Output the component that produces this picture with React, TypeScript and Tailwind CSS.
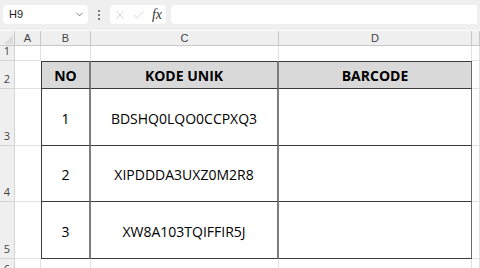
import { ChevronDown, X, Check } from "lucide-react";

const rowHead = "bg-[#efefef] border-r border-b border-[#d4d4d4] text-[11px] text-[#444] flex items-end justify-center pb-[1px]";
const gridCell = "border-r border-b border-[#e1e1e1] bg-white";

export default function App() {
  const rows = [
    { no: "1", code: "BDSHQ0LQO0CCPXQ3" },
    { no: "2", code: "XIPDDDA3UXZ0M2R8" },
    { no: "3", code: "XW8A103TQIFFIR5J" },
  ];
  const heights = ["h-[57px]", "h-[56px]", "h-[57px]"];

  return (
    <div className="w-[480px] h-[268px] overflow-hidden bg-white font-['Open_Sans',sans-serif]">
      {/* formula bar */}
      <div className="h-[30px] bg-[#efefef] flex items-center gap-[5px] px-[3px] pb-[1px]">
        <div className="w-[85px] h-[19px] bg-white rounded-[4px] flex items-center justify-between pl-[6px] pr-[3px] text-[11px] text-[#222] font-['Liberation_Sans',sans-serif]">
          <span>H9</span>
          <ChevronDown className="w-[11px] h-[11px] text-[#555]" strokeWidth={1.6} />
        </div>
        <div className="w-[12px] flex flex-col items-center gap-[2px]">
          <span className="w-[2px] h-[2px] bg-[#555] rounded-full" />
          <span className="w-[2px] h-[2px] bg-[#555] rounded-full" />
          <span className="w-[2px] h-[2px] bg-[#555] rounded-full" />
        </div>
        <div className="w-[56px] h-[19px] bg-white rounded-[4px] flex items-center justify-between pl-[3px] pr-[4px]">
          <X className="w-[14px] h-[14px] text-[#c4c4c4]" strokeWidth={1.2} />
          <Check className="w-[14px] h-[14px] text-[#c4c4c4]" strokeWidth={1.2} />
          <span className="text-[14px] italic text-[#333] font-['Liberation_Serif',serif] leading-none">fx</span>
        </div>
        <div className="flex-1 h-[19px] bg-white rounded-l-[4px]" />
      </div>

      <div className="h-[1px] bg-white" />

      {/* sheet grid */}
      <div className="grid grid-cols-[15px_26px_50px_188px_193px_1fr]">
        {/* column headers */}
        <div className="h-[15px] bg-[#efefef] border-r border-b border-[#c8c8c8] flex items-end justify-end p-[1px]">
          <div className="w-0 h-0 border-l-[9px] border-l-transparent border-b-[9px] border-b-[#dcdcdc]" />
        </div>
        {["A", "B", "C", "D", ""].map((c, i) => (
          <div
            key={i}
            className="h-[15px] bg-[#efefef] border-r border-b border-[#c8c8c8] text-[11px] text-[#444] flex items-center justify-center font-['Liberation_Sans',sans-serif]"
          >
            {c}
          </div>
        ))}

        {/* row 1 */}
        <div className={`h-[15px] ${rowHead}`}>1</div>
        <div className={gridCell} />
        <div className="border-r border-[#e1e1e1]" />
        <div className="border-r border-[#e1e1e1]" />
        <div className="border-r border-[#e1e1e1]" />
        <div className={gridCell} />

        {/* row 2 headers */}
        <div className={`h-[28px] ${rowHead}`}>2</div>
        <div className="border-b border-[#e1e1e1]" />
        <div className="bg-[#d9d9d9] border-y-[1.5px] border-l-[1.5px] border-r-2 border-[#3c3c3c] border-r-[#7d7d7d] flex items-center justify-center text-[14px] font-bold text-black">
          NO
        </div>
        <div className="bg-[#d9d9d9] border-y-[1.5px] border-r-2 border-[#3c3c3c] border-r-[#7d7d7d] flex items-center justify-center text-[14px] font-bold text-black">
          KODE UNIK
        </div>
        <div className="bg-[#d9d9d9] border-y-[1.5px] border-r-[1.5px] border-[#3c3c3c] border-r-[#6a6a6a] flex items-center justify-center text-[14px] font-bold text-black">
          BARCODE
        </div>
        <div className={gridCell} />

        {rows.map((r, i) => (
          <div key={r.no} className="contents">
            <div className={`${heights[i]} ${rowHead}`}>{i + 3}</div>
            <div className="border-b border-[#e1e1e1]" />
            <div className="border-b-[1.5px] border-l-[1.5px] border-r-2 border-[#3c3c3c] border-r-[#7d7d7d] flex items-center justify-center text-[14px] text-black pt-[2px]">
              {r.no}
            </div>
            <div className="border-b-[1.5px] border-r-2 border-[#3c3c3c] border-r-[#7d7d7d] flex items-center justify-center text-[14px] text-black pt-[2px]">
              {r.code}
            </div>
            <div className="border-b-[1.5px] border-r-[1.5px] border-[#3c3c3c] border-r-[#6a6a6a]" />
            <div className={gridCell} />
          </div>
        ))}

        {/* row 6 */}
        <div className={`h-[20px] ${rowHead} items-start pt-[2px]`}>6</div>
        <div className={gridCell} />
        <div className={gridCell} />
        <div className={gridCell} />
        <div className={gridCell} />
        <div className={gridCell} />
      </div>
    </div>
  );
}
